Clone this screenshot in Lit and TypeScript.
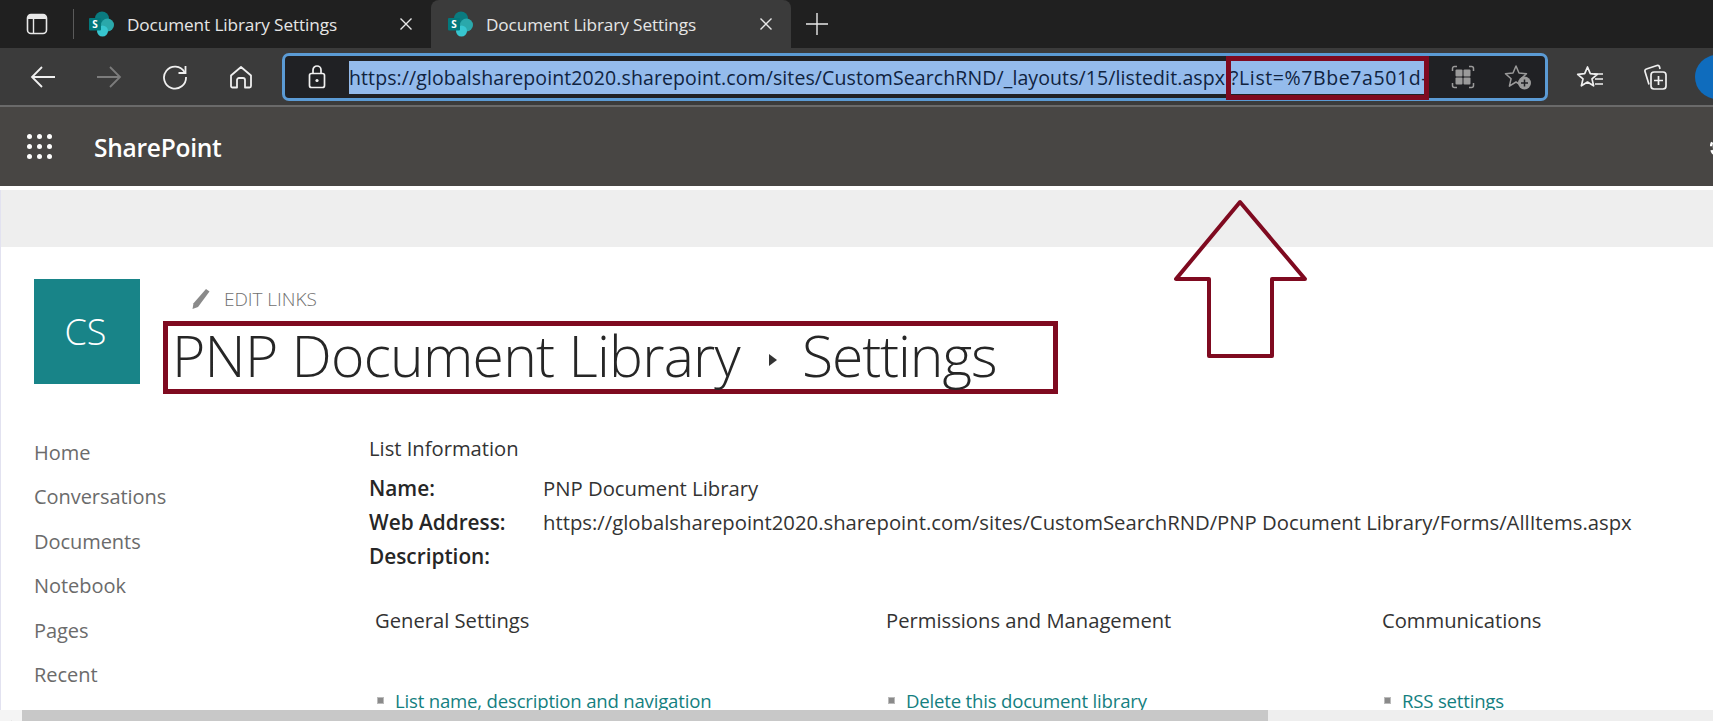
import { LitElement, html, css, svg } from "lit";
import { customElement } from "lit/decorators.js";

const spLogo = (x: number) => html`<svg class="sp" style="margin-left:${x}px" width="26" height="26" viewBox="0 0 26 26">
  <circle cx="13" cy="7.5" r="7" fill="#0a7b80"/>
  <circle cx="18.5" cy="14" r="6.5" fill="#2aa8ab"/>
  <circle cx="13.5" cy="20" r="5.5" fill="#37c6d0"/>
  <rect x="0" y="7" width="12" height="12.5" rx="1" fill="#03787c"/>
  <text x="6" y="16.8" font-size="10" font-weight="700" fill="#fff" text-anchor="middle" font-family="Open Sans, sans-serif">S</text>
</svg>`;

const ic = (w: number, h: number, vb: string, body: unknown, ml: number, cls = "") =>
  html`<svg class="ic ${cls}" style="margin-left:${ml}px" width="${w}" height="${h}" viewBox="${vb}">${body}</svg>`;

@customElement("app-root")
export class AppRoot extends LitElement {
  static styles = css`
    :host { display: block; width: 1713px; height: 721px; overflow: hidden; position: relative; background: #fff;
      font-family: "Open Sans", "Noto Sans", sans-serif; color: #333; }
    .tabs { height: 48px; background: #202020; display: flex; align-items: center; position: relative; color: #e6e6e6; }
    .divider { width: 1px; height: 30px; background: #5a5a5a; margin-left: 25px; flex: none; }
    .ic { flex: none; display: block; }
    .sp { flex: none; display: block; }
    .tab { display: flex; align-items: center; font-size: 17.2px; white-space: nowrap; flex: none; }
    .t1 { width: 357px; height: 48px; }
    .t2 { width: 360px; height: 48px; background: #3b3b3b; border-radius: 8px 8px 0 0; }
    .ttl { margin-left: 12px; width: 244px; flex: none; letter-spacing: -0.1px; }
    .tools { height: 57px; background: #3b3b3b; border-bottom: 2px solid #6a6a6a; display: flex; align-items: center; }
    .addr { box-sizing: border-box; margin-left: 29px; width: 1266px; height: 48px; border: 3px solid #5b9bd5; border-radius: 7px;
      background: #202124; display: flex; align-items: center; position: relative; flex: none; }
    .url { position: absolute; left: 64px; top: 5px; width: 1080px; height: 33px; background: #94bbec; color: #10233f;
      font-size: 19.5px; line-height: 33px; white-space: nowrap; overflow: hidden; letter-spacing: 0.1px; }
    .q { letter-spacing: 0.6px; margin-left: 5px; }
    .urlbox { position: absolute; left: 941px; top: 0px; width: 203px; height: 44px; box-sizing: border-box; border: 5px solid #7f0a20; }
    .suite { height: 79px; background: #484644; display: flex; align-items: center; color: #fff; position: relative; overflow: hidden; }
    .dots { display: grid; grid-template-columns: repeat(3, 5px); gap: 5px; margin-left: 27px; }
    .dots i { width: 5px; height: 5px; border-radius: 50%; background: #fff; }
    .brand { margin-left: 42px; padding-top: 2px; font-size: 24.5px; font-weight: 600; letter-spacing: -0.25px; }
    .gap { height: 4px; }
    .band { height: 57px; background: #eeeeee; }
    .head { display: flex; padding: 32px 0 0 34px; height: 134px; box-sizing: border-box; }
    .logo { width: 106px; height: 105px; background: #188488; color: #fff; font-size: 36px; font-weight: 300;
      display: flex; align-items: center; justify-content: center; padding-right: 3px; box-sizing: border-box; }
    .titlecol { margin-left: 23px; }
    .edit { display: flex; align-items: center; height: 42px; padding: 0 0 2px 28px; font-size: 19px; color: #707070; font-weight: 300; letter-spacing: -0.05px; box-sizing: border-box; gap: 13px; }
    .title { box-sizing: border-box; width: 895px; height: 73px; border: 5px solid #7f0a20; font-size: 57px; font-weight: 300; color: #262626;
      line-height: 60px; padding: 0 0 5px 4px; white-space: nowrap; letter-spacing: -0.75px; display: flex; align-items: center; }
    .title .s2 { letter-spacing: -1.1px; }
    .sep { display: inline-block; flex: none; width: 0; height: 0; border-left: 8px solid #333; border-top: 6px solid transparent; border-bottom: 6px solid transparent; margin: 10px 25px 0 29px; }
    .main { display: flex; height: 340px; overflow: hidden; }
    .nav { width: 369px; padding: 50px 0 0 34px; box-sizing: border-box; flex: none; }
    .nav div { height: 44.4px; line-height: 44.4px; font-size: 20px; color: #6b6b6b; letter-spacing: -0.05px; }
    .content { flex: none; width: 1344px; font-size: 20.3px; color: #333; }
    .h { font-size: 20.2px; }
    .info-h { height: 26px; line-height: 26px; margin-top: 54px; }
    .row { display: flex; height: 34px; line-height: 34px; white-space: nowrap; }
    .row b { width: 174px; flex: none; font-weight: 600; color: #262626; font-size: 20.8px; }
    .rows { margin-top: 10px; }
    .cols { display: grid; grid-template-columns: 511px 496px 1fr; margin-top: 33px; padding-left: 6px; }
    .cols .h { height: 28px; line-height: 28px; }
    .link { display: flex; align-items: center; margin-top: 53px; color: #14807f; height: 26px; white-space: nowrap; margin-left: 2px; font-size: 18.6px; letter-spacing: -0.2px; }
    .b { width: 7px; height: 7px; background: #8a8a8a; border: 1px solid #bbb; box-sizing: border-box; margin-right: 11px; flex: none; }
    .sb { position: absolute; left: 0; right: 0; bottom: 0; height: 11px; background: #eeeeee; display: flex; }
    .sb .arrow { width: 22px; background: #f4f4f4; flex: none; }
    .sb .thumb { width: 1246px; background: #c8c8c8; }
    .edge { position: absolute; left: 0; top: 190px; bottom: 11px; width: 1px; background: #e2e2f0; }
    .big { position: absolute; left: 0; top: 0; pointer-events: none; }
  `;

  render() {
    const close = (ml: number) => ic(14, 14, "0 0 14 14", svg`<path d="M1.5 1.5 12.5 12.5M12.5 1.5 1.5 12.5" stroke="#e8e8e8" stroke-width="1.4"/>`, ml);
    return html`
      <div class="tabs">
        ${ic(22, 22, "0 0 22 22", svg`<rect x="1.5" y="1.5" width="19" height="19" rx="3.5" fill="none" stroke="#e8e8e8" stroke-width="1.6"/><path d="M2 6V3.5A1.5 1.5 0 0 1 3.5 2h15A1.5 1.5 0 0 1 20 3.5V6z" fill="#e8e8e8"/><path d="M7.5 6v14" stroke="#e8e8e8" stroke-width="1.4"/>`, 26)}
        <div class="divider"></div>
        <div class="tab t1">${spLogo(15)}<span class="ttl">Document Library Settings</span>${close(28)}</div>
        <div class="tab t2">${spLogo(17)}<span class="ttl">Document Library Settings</span>${close(29)}</div>
        ${ic(24, 24, "0 0 24 24", svg`<path d="M12 1v22M1 12h22" stroke="#e8e8e8" stroke-width="1.4"/>`, 14)}
      </div>

      <div class="tools">
        ${ic(26, 24, "0 0 26 24", svg`<path d="M25 12H2M12 2 2 12l10 10" fill="none" stroke="#f0f0f0" stroke-width="1.8"/>`, 30)}
        ${ic(26, 24, "0 0 26 24", svg`<path d="M1 12h23M14 2l10 10-10 10" fill="none" stroke="#7c7c7c" stroke-width="1.8"/>`, 40)}
        ${ic(26, 26, "0 0 26 26", svg`<path d="M22.5 8A11 11 0 1 0 24 13" fill="none" stroke="#f0f0f0" stroke-width="1.8"/><path d="M23.5 2v7h-7" fill="none" stroke="#f0f0f0" stroke-width="1.8"/>`, 40)}
        ${ic(24, 24, "0 0 24 24", svg`<path d="M2 10.5 12 2l10 8.5V21a1.5 1.5 0 0 1-1.5 1.5H16V15a2 2 0 0 0-2-2h-4a2 2 0 0 0-2 2v7.5H3.5A1.5 1.5 0 0 1 2 21z" fill="none" stroke="#f0f0f0" stroke-width="1.8" stroke-linejoin="round"/>`, 41)}
        <div class="addr">
          ${ic(18, 24, "0 0 18 24", svg`<rect x="1.5" y="8.5" width="15" height="14" rx="2" fill="none" stroke="#f0f0f0" stroke-width="1.7"/><path d="M5 8.5V5a4 4 0 0 1 8 0v3.5" fill="none" stroke="#f0f0f0" stroke-width="1.7"/><circle cx="9" cy="15.5" r="1.6" fill="#f0f0f0"/>`, 23)}
          <div class="url">https://globalsharepoint2020.sharepoint.com/sites/CustomSearchRND/_layouts/15/listedit.aspx<span class="q">?List=%7Bbe7a501d-</span></div>
          <div class="urlbox"></div>
          ${ic(24, 24, "0 0 24 24", svg`<path d="M1.5 6V3.5a2 2 0 0 1 2-2H6M18 1.5h2.5a2 2 0 0 1 2 2V6M1.5 18v2.5a2 2 0 0 0 2 2H6M18 22.500h2.500a2 2 0 0 0 2-2V18" fill="none" stroke="#9a9a9a" stroke-width="1.5"/><rect x="4.500" y="4.500" width="7" height="7" rx="1" fill="#9a9a9a"/><rect x="12.500" y="4.500" width="7" height="7" rx="1" fill="#9a9a9a"/><rect x="4.500" y="12.500" width="7" height="7" rx="1" fill="#9a9a9a"/><rect x="12.500" y="12.500" width="7" height="7" rx="1" fill="#9a9a9a"/>`, 1125)}
          ${ic(28, 26, "0 0 28 26", svg`<path d="M12 2l3 7 7.500.7-5.600 5 1.700 7.400L12 18l-6.600 4.100 1.700-7.400L1.500 9.700 9 9z" fill="none" stroke="#9a9a9a" stroke-width="1.500" stroke-linejoin="round"/><circle cx="20.500" cy="19" r="6.500" fill="#9a9a9a"/><path d="M20.500 15.500v7M17 19h7" stroke="#202124" stroke-width="1.500"/>`, 29)}
        </div>
        ${ic(28, 26, "0 0 28 26", svg`<path d="M10.500 2l2.800 6.600 7 .7-5.300 4.600 1.600 6.900-6.100-3.700-6.100 3.700 1.600-6.900L.7 9.300l7-.7z" transform="translate(1 1)" fill="none" stroke="#f0f0f0" stroke-width="1.700" stroke-linejoin="round"/><path d="M18 10h9M19 15h8M19 20h8" stroke="#f0f0f0" stroke-width="1.700"/>`, 28)}
        ${ic(26, 28, "0 0 26 28", svg`<path d="M7 21.500 3 8.500a2 2 0 0 1 1.400-2.500L15 2.500a2 2 0 0 1 2.500 1.300L18 6" fill="none" stroke="#f0f0f0" stroke-width="1.700"/><rect x="9" y="9" width="15" height="17" rx="3" fill="none" stroke="#f0f0f0" stroke-width="1.700"/><path d="M16.500 13v9M12 17.500h9" stroke="#f0f0f0" stroke-width="1.700"/>`, 38)}
        <svg class="ic" style="margin-left:27px" width="18" height="44" viewBox="0 0 18 44"><circle cx="22" cy="22" r="22" fill="#0f6cbd"/></svg>
      </div>

      <div class="suite">
        <div class="dots">${[...Array(9)].map(() => html`<i></i>`)}</div>
        <div class="brand">SharePoint</div>
        ${ic(22, 22, "0 0 22 22", svg`<circle cx="11" cy="11" r="7" fill="none" stroke="#fff" stroke-width="2.500"/><circle cx="11" cy="11" r="10" fill="none" stroke="#fff" stroke-width="2.500" stroke-dasharray="4 4"/>`, 1488)}
      </div>
      <div class="gap"></div>
      <div class="band"></div>

      <div class="head">
        <div class="logo">CS</div>
        <div class="titlecol">
          <div class="edit">
            ${ic(20, 22, "0 0 20 22", svg`<path d="M15 1 18.500 3.500 7 19 1.500 21l1-5.700z" fill="#8a8a8a"/>`, 0)}
            <span>EDIT LINKS</span>
          </div>
          <div class="title"><span>PNP Document Library</span><i class="sep"></i><span class="s2">Settings</span></div>
        </div>
      </div>

      <div class="main">
        <div class="nav">
          ${["Home","Conversations","Documents","Notebook","Pages","Recent"].map(n => html`<div>${n}</div>`)}
        </div>
        <div class="content">
          <div class="h info-h">List Information</div>
          <div class="rows">
            <div class="row"><b>Name:</b><span>PNP Document Library</span></div>
            <div class="row"><b>Web Address:</b><span>https://globalsharepoint2020.sharepoint.com/sites/CustomSearchRND/PNP Document Library/Forms/AllItems.aspx</span></div>
            <div class="row"><b>Description:</b></div>
          </div>
          <div class="cols">
            <div><div class="h">General Settings</div><div class="link"><i class="b"></i>List name, description and navigation</div></div>
            <div><div class="h">Permissions and Management</div><div class="link"><i class="b"></i>Delete this document library</div></div>
            <div><div class="h">Communications</div><div class="link"><i class="b"></i>RSS settings</div></div>
          </div>
        </div>
      </div>

      <div class="edge"></div>
      <div class="sb">
        <div class="arrow"><svg width="22" height="11" viewBox="0 0 22 11"><path d="M12 5.500 6 11" fill="none" stroke="#333" stroke-width="2"/></svg></div>
        <div class="thumb"></div>
      </div>
      <svg class="big" width="1713" height="721" viewBox="0 0 1713 721">
        <path d="M1240 202 1176 279H1209V356H1272V279H1305Z" fill="none" stroke="#7f0a20" stroke-width="4" stroke-linejoin="round"/>
      </svg>
    `;
  }
}
